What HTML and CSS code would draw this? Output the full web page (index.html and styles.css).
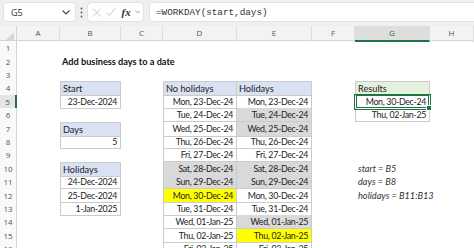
FILE: index.html
```html
<!DOCTYPE html>
<html lang="en">
<head>
    <meta charset="UTF-8">
    <meta name="viewport" content="width=device-width, initial-scale=1.0">
    <title>WORKDAY - add business days to a date</title>
    <link rel="stylesheet" href="styles.css">
</head>
<body>

<!-- formula bar -->
<div class="formula-bar">
    <div class="name-box">
        <span>G5</span>
        <svg class="chev" width="8" height="5" viewBox="0 0 8 5"><path d="M0.5 0.5 L4 4 L7.5 0.5" fill="none" stroke="#444" stroke-width="1.1"/></svg>
    </div>
    <svg class="dots" width="3" height="11" viewBox="0 0 3 11">
        <circle cx="1.5" cy="1.5" r="0.9" fill="#555"/>
        <circle cx="1.5" cy="5.5" r="0.9" fill="#555"/>
        <circle cx="1.5" cy="9.5" r="0.9" fill="#555"/>
    </svg>
    <div class="fx-box">
        <svg width="11" height="11" viewBox="0 0 11 11"><path d="M1 1 L10 10 M10 1 L1 10" stroke="#c4c4c4" stroke-width="1.1"/></svg>
        <svg width="11" height="10" viewBox="0 0 11 10"><path d="M0.5 5.5 L3.8 9 L10.5 0.5" fill="none" stroke="#c4c4c4" stroke-width="1.1"/></svg>
        <span class="fx">fx</span>
        <svg width="6" height="4" viewBox="0 0 6 4"><path d="M0.5 0.5 L3 3.2 L5.5 0.5" fill="none" stroke="#888" stroke-width="0.9"/></svg>
    </div>
    <div class="formula">=WORKDAY(start,days)</div>
</div>

<!-- worksheet -->
<div class="sheet">
    <div class="row col-head">
        <div class="corner"><svg width="8" height="8" viewBox="0 0 8 8"><path d="M8 0 L8 8 L0 8 Z" fill="#d6d6d6"/></svg></div>
        <div class="ch">A</div>
        <div class="ch">B</div>
        <div class="ch">C</div>
        <div class="ch">D</div>
        <div class="ch">E</div>
        <div class="ch">F</div>
        <div class="ch active">G</div>
        <div class="ch">H</div>
    </div>

    <div class="row"><div class="rh">1</div></div>
    <div class="row">
        <div class="rh">2</div>
        <div class="cell b title">Add business days to a date</div>
    </div>
    <div class="row"><div class="rh">3</div></div>
    <div class="row">
        <div class="rh">4</div>
        <div class="cell b box top head">Start</div>
        <div class="cell d box top head">No holidays</div>
        <div class="cell e box-r top head">Holidays</div>
        <div class="cell g box top head-green">Results</div>
    </div>
    <div class="row">
        <div class="rh active">5</div>
        <div class="cell b box num">23-Dec-2024</div>
        <div class="cell d box num">Mon, 23-Dec-24</div>
        <div class="cell e box-r num">Mon, 23-Dec-24</div>
        <div class="cell g box num sel">Mon, 30-Dec-24</div>
    </div>
    <div class="row">
        <div class="rh">6</div>
        <div class="cell d box num">Tue, 24-Dec-24</div>
        <div class="cell e box-r num gray">Tue, 24-Dec-24</div>
        <div class="cell g box num">Thu, 02-Jan-25</div>
    </div>
    <div class="row">
        <div class="rh">7</div>
        <div class="cell b box top head">Days</div>
        <div class="cell d box num">Wed, 25-Dec-24</div>
        <div class="cell e box-r num gray">Wed, 25-Dec-24</div>
    </div>
    <div class="row">
        <div class="rh">8</div>
        <div class="cell b box num">5</div>
        <div class="cell d box num">Thu, 26-Dec-24</div>
        <div class="cell e box-r num">Thu, 26-Dec-24</div>
    </div>
    <div class="row">
        <div class="rh">9</div>
        <div class="cell d box num">Fri, 27-Dec-24</div>
        <div class="cell e box-r num">Fri, 27-Dec-24</div>
    </div>
    <div class="row">
        <div class="rh">10</div>
        <div class="cell b box top head">Holidays</div>
        <div class="cell d box num gray">Sat, 28-Dec-24</div>
        <div class="cell e box-r num gray">Sat, 28-Dec-24</div>
        <div class="cell g note">start = B5</div>
    </div>
    <div class="row">
        <div class="rh">11</div>
        <div class="cell b box num">24-Dec-2024</div>
        <div class="cell d box num gray">Sun, 29-Dec-24</div>
        <div class="cell e box-r num gray">Sun, 29-Dec-24</div>
        <div class="cell g note">days = B8</div>
    </div>
    <div class="row">
        <div class="rh">12</div>
        <div class="cell b box num">25-Dec-2024</div>
        <div class="cell d box num yellow">Mon, 30-Dec-24</div>
        <div class="cell e box-r num">Mon, 30-Dec-24</div>
        <div class="cell g note">holidays = B11:B13</div>
    </div>
    <div class="row">
        <div class="rh">13</div>
        <div class="cell b box num">1-Jan-2025</div>
        <div class="cell d box num">Tue, 31-Dec-24</div>
        <div class="cell e box-r num">Tue, 31-Dec-24</div>
    </div>
    <div class="row">
        <div class="rh">14</div>
        <div class="cell d box num">Wed, 01-Jan-25</div>
        <div class="cell e box-r num gray">Wed, 01-Jan-25</div>
    </div>
    <div class="row">
        <div class="rh">15</div>
        <div class="cell d box num">Thu, 02-Jan-25</div>
        <div class="cell e box-r num yellow">Thu, 02-Jan-25</div>
    </div>
    <div class="row">
        <div class="rh">16</div>
        <div class="cell d box num">Fri, 03-Jan-25</div>
        <div class="cell e box-r num">Fri, 03-Jan-25</div>
    </div>
</div>

</body>
</html>
```

FILE: styles.css
```css
body {
    margin: 0;
    width: 474px;
    height: 248px;
    overflow: hidden;
    background: #fff;
    font-family: Lato, "Liberation Sans", sans-serif;
    color: #222;
}

/* formula bar */
.formula-bar {
    height: 26px;
    background: #efefef;
    display: flex;
    align-items: flex-start;
    padding-top: 2px;
    box-sizing: border-box;
}
.name-box, .fx-box, .formula {
    height: 20px;
    background: #fff;
    border: 1px solid #e2e2e2;
    border-radius: 4px;
    box-sizing: border-box;
    display: flex;
    align-items: center;
}
.name-box {
    width: 73px;
    margin-left: 3px;
    padding: 0 5px 0 7px;
    justify-content: space-between;
    font-family: "Open Sans", sans-serif;
    font-size: 9px;
    color: #333;
}
.dots {
    margin: 5px 4px 0 4px;
}
.fx-box {
    width: 57px;
    padding: 0 3px 0 4px;
    gap: 4px;
}
.fx {
    font-family: "Liberation Serif", serif;
    font-style: italic;
    font-weight: bold;
    font-size: 11px;
    color: #333;
    margin-left: 2px;
}
.formula {
    flex: 1;
    margin-left: 5px;
    margin-right: -6px;
    padding-left: 6px;
    font-family: "Liberation Mono", monospace;
    font-size: 9.3px;
    color: #333;
}

/* worksheet grid */
.row {
    display: grid;
    grid-template-columns: 17px 43px 61px 42px 74px 75px 43px 75px 44px;
    height: 13.4px;
}
.row > * {
    grid-row: 1;
}
.col-head {
    height: 15.3px;
    background: #f3f3f3;
    border-bottom: 1px solid #d4d4d4;
    box-sizing: border-box;
}
.corner {
    display: flex;
    align-items: flex-end;
    justify-content: flex-end;
    padding: 0 2px 2px 0;
    border-right: 1px solid #d4d4d4;
}
.ch {
    font-family: "Open Sans", sans-serif;
    font-size: 8px;
    color: #555;
    text-align: center;
    line-height: 14px;
    border-right: 1px solid #dedede;
}
.ch.active {
    background: #dedede;
    color: #1e6b40;
    border-bottom: 2px solid #217346;
}
.rh {
    grid-column: 1;
    background: #f9f9f9;
    border-right: 1px solid #d4d4d4;
    font-family: "Open Sans", sans-serif;
    font-size: 8px;
    color: #555;
    text-align: center;
    line-height: 13.4px;
}
.rh.active {
    background: #e4e4e4;
    color: #1e6b40;
    border-right: 2px solid #217346;
}

/* cells */
.cell {
    font-size: 9.2px;
    line-height: 13px;
    padding: 0 2px;
    white-space: nowrap;
    box-sizing: border-box;
}
.b { grid-column: 3; }
.d { grid-column: 5; }
.e { grid-column: 6; }
.g { grid-column: 8; }

.title {
    font-weight: bold;
    color: #111;
}
.box {
    border: 1px solid #cbcbcb;
    border-top: none;
}
.box-r {
    border-right: 1px solid #cbcbcb;
    border-bottom: 1px solid #cbcbcb;
}
.top {
    border-top: 1px solid #cbcbcb;
}
.head {
    background: #d9e1f2;
}
.head-green {
    background: #e6f0df;
}
.num {
    text-align: right;
    font-size: 8.8px;
    letter-spacing: -0.3px;
    padding-right: 3px;
}
.gray {
    background: #d9d9d9;
}
.yellow {
    background: #ffff00;
}
.note {
    font-style: italic;
    color: #333;
    padding-left: 3px;
}

/* active cell with fill handle */
.sel {
    position: relative;
    border-color: transparent;
    box-shadow: 0 0 0 1px #217346, inset 0 0 0 1px #217346;
}
.sel::after {
    content: "";
    position: absolute;
    right: -3px;
    bottom: -3px;
    width: 4px;
    height: 4px;
    background: #217346;
    border: 1px solid #fff;
}
```
